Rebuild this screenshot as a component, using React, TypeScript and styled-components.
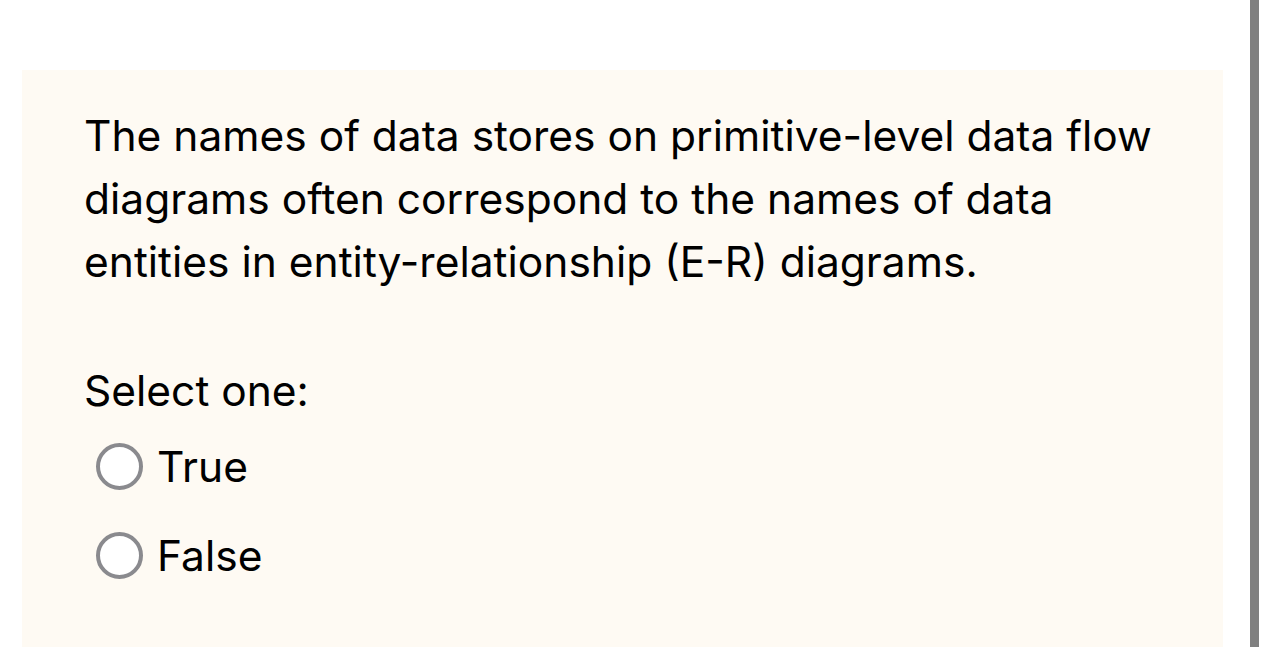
import React from "react";
import styled, { createGlobalStyle } from "styled-components";

const Global = createGlobalStyle`
  html, body { margin: 0; padding: 0; background: #ffffff; }
  body { font-family: Inter, "Liberation Sans", sans-serif; color: #000; }
`;

const Page = styled.div`
  display: flex;
  width: 1261px;
  height: 647px;
  overflow: hidden;
`;

const Main = styled.div`
  flex: 0 0 1250px;
  padding: 70px 0 0 22px;
  box-sizing: border-box;
`;

const Bar = styled.div`
  flex: 0 0 9px;
  background: #808080;
`;

const Card = styled.div`
  width: 1201px;
  min-height: 640px;
  background: #fefaf3;
  padding: 34px 62px 0 62px;
  box-sizing: border-box;
`;

const Question = styled.p`
  margin: 0;
  font-size: 42.5px;
  line-height: 63px;
`;

const Prompt = styled.div`
  margin-top: 66px;
  font-size: 42.5px;
  line-height: 63px;
`;

const Options = styled.div`
  display: flex;
  flex-direction: column;
  gap: 42px;
  margin-top: 21px;
  padding-left: 12px;
`;

const Option = styled.label`
  display: flex;
  align-items: center;
  gap: 14px;
  font-size: 42.5px;
  line-height: 47px;
`;

const Radio = styled.span`
  width: 47px;
  height: 47px;
  border-radius: 50%;
  border: 4px solid #8a8a8e;
  background: #ffffff;
  box-sizing: border-box;
  flex: 0 0 auto;
`;

export default function App() {
  return (
    <>
      <Global />
      <Page>
        <Main>
          <Card>
            <Question>
              The names of data stores on primitive-level data flow diagrams often correspond to the names of data entities in entity-relationship (E-R) diagrams.
            </Question>
            <Prompt>Select one:</Prompt>
            <Options>
              <Option>
                <Radio />
                True
              </Option>
              <Option>
                <Radio />
                False
              </Option>
            </Options>
          </Card>
        </Main>
        <Bar />
      </Page>
    </>
  );
}
